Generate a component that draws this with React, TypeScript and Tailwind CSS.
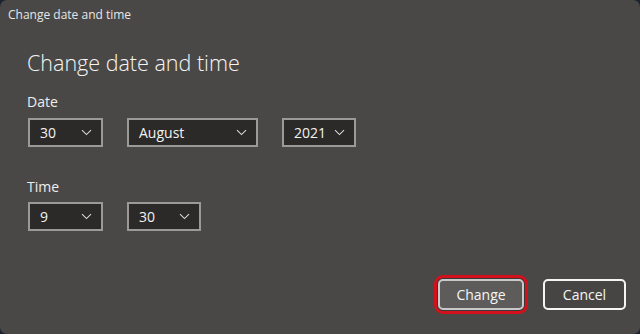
import React from "react";

const font = { fontFamily: '"Open Sans", "Noto Sans", sans-serif' };

function Chevron() {
  return (
    <svg width="11" height="7" viewBox="0 0 11 7" fill="none" className="shrink-0">
      <path d="M1 1.2 L5.5 5.6 L10 1.2" stroke="#d8d8d8" strokeWidth="1.1" />
    </svg>
  );
}

function Select({ value, width }: { value: string; width: string }) {
  return (
    <div
      className={`${width} h-[29px] flex items-center justify-between pl-[10px] pr-[9px] bg-[#2b2a28] border-2 border-[#9b9a98] text-[14px] text-[#f2f2f2]`}
    >
      <span className="leading-none">{value}</span>
      <Chevron />
    </div>
  );
}

export default function App() {
  return (
    <div className="w-[640px] h-[334px] bg-[#1c2230]" style={font}>
      <div className="w-full h-full rounded-[7px] bg-[#4a4846] flex flex-col">
        <div className="pl-[8px] pt-[7px] text-[12px] leading-[16px] text-[#e6e6e6]">
          Change date and time
        </div>
        <div className="pl-[27px] pt-[25px] text-[21.5px] font-light leading-[30px] text-[#f5f5f5]">
          Change date and time
        </div>
        <div className="pl-[27px] pt-[15px] text-[14px] leading-[18px] text-[#eeeeee]">Date</div>
        <div className="pl-[28px] pt-[7px] flex gap-[24px]">
          <Select value="30" width="w-[75px]" />
          <Select value="August" width="w-[131px]" />
          <Select value="2021" width="w-[74px]" />
        </div>
        <div className="pl-[27px] pt-[31px] text-[14px] leading-[18px] text-[#eeeeee]">Time</div>
        <div className="pl-[28px] pt-[6px] flex gap-[24px]">
          <Select value="9" width="w-[75px]" />
          <Select value="30" width="w-[74px]" />
        </div>
        <div className="flex-1" />
        <div className="flex justify-end gap-[19px] pr-[14px] pb-[24px]">
          <button
            className="w-[86px] h-[31px] rounded-[5px] bg-[#5e5c5a] border-2 border-[#c9c9c9] text-[14px] text-[#f5f5f5] ring-[3px] ring-[#d3111c] ring-offset-[1px] ring-offset-[#3a3836]"
            style={font}
          >
            Change
          </button>
          <button
            className="w-[83px] h-[31px] rounded-[5px] bg-[#474543] border-2 border-[#f4f4f4] text-[14px] text-[#f5f5f5]"
            style={font}
          >
            Cancel
          </button>
        </div>
      </div>
    </div>
  );
}
